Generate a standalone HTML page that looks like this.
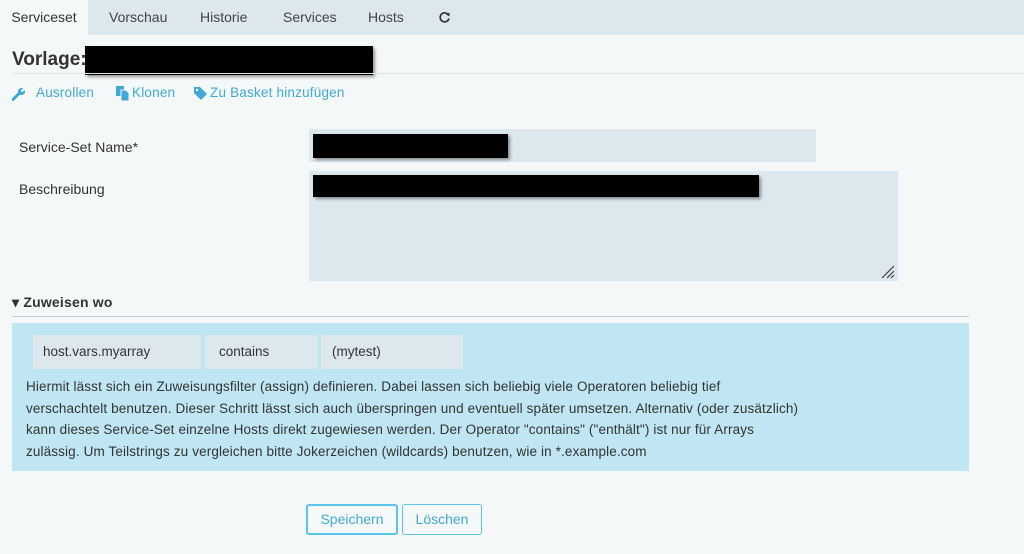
<!DOCTYPE html>
<html><head><meta charset="utf-8"><style>
*{box-sizing:border-box;margin:0;padding:0}
body{width:1024px;height:554px;background:#f5f8f9;font-family:"Liberation Sans",sans-serif;color:#333;font-size:14px;position:relative;overflow:hidden}
.tabs{position:absolute;left:0;top:0;width:1024px;height:35px;background:#dde8ee}
.tab{position:absolute;top:0;height:35px;line-height:35px;font-size:14px;color:#444}
.abs{position:absolute}
.blk{position:absolute;background:#000;box-shadow:2px 2px 3px rgba(0,0,0,.4)}
.link{position:absolute;color:#3fa9d6;font-size:13.5px;letter-spacing:.2px}
.lbl{position:absolute;font-size:14px;color:#333}
.inp{position:absolute;background:#dde8ee}
.chip{position:absolute;top:335px;height:34px;line-height:34px;background:#dde8ee;font-size:13.5px;color:#333}
.txt{position:absolute;left:26px;top:376px;font-size:13.5px;line-height:21.5px;color:#333;letter-spacing:.13px}
.btn{position:absolute;top:504px;height:31px;line-height:29px;text-align:center;border:1px solid #5cc4e8;border-radius:3px;color:#3fa9d6;font-size:14px;background:#f5f8f9}
</style></head><body>
<div class="tabs">
<div class="tab" style="left:0;width:88px;background:#f5f8f9;text-align:center;color:#333">Serviceset</div>
<div class="tab" style="left:109px">Vorschau</div>
<div class="tab" style="left:200px">Historie</div>
<div class="tab" style="left:283px">Services</div>
<div class="tab" style="left:368px">Hosts</div>
<svg class="abs" style="left:438px;top:11px" width="13" height="13" viewBox="0 0 13 13"><path d="M10.5 4A4.5 4.5 0 1 0 11 7.5" fill="none" stroke="#333" stroke-width="1.6"/><path d="M8 3.5L11.5 1.5L11.5 5.5Z" fill="#333"/></svg>
</div>
<div class="abs" style="left:12px;top:49px;font-size:19px;font-weight:bold;color:#333">Vorlage:</div>
<div class="blk" style="left:85px;top:46px;width:288px;height:29px"></div>
<div class="abs" style="left:12px;top:73px;width:1012px;height:1px;background:#dfe3e6"></div>
<svg class="abs" style="left:12px;top:87px" width="14" height="14" viewBox="0 0 14 14"><path d="M1 12.5L7 6.5" stroke="#3fa9d6" stroke-width="3" stroke-linecap="round"/><circle cx="9.5" cy="4.5" r="3.5" fill="#3fa9d6"/><path d="M9.5 4.5L13 1" stroke="#f5f8f9" stroke-width="2.2"/></svg>
<div class="link" style="left:36px;top:85px">Ausrollen</div>
<svg class="abs" style="left:116px;top:86px" width="14" height="15" viewBox="0 0 14 15"><rect x="0" y="0" width="8" height="10" fill="#3fa9d6"/><path d="M5 4H10L13 7V15H5Z" fill="#3fa9d6" stroke="#f5f8f9" stroke-width="1"/></svg>
<div class="link" style="left:132px;top:85px">Klonen</div>
<svg class="abs" style="left:194px;top:87px" width="13" height="13" viewBox="0 0 13 13"><path d="M0 0H6L13 7L7 13L0 6Z" fill="#3fa9d6"/><circle cx="3" cy="3" r="1.2" fill="#f5f8f9"/></svg>
<div class="link" style="left:210px;top:85px">Zu Basket hinzufügen</div>
<div class="lbl" style="left:19px;top:139px">Service-Set Name*</div>
<div class="inp" style="left:309px;top:129px;width:507px;height:33px"></div>
<div class="blk" style="left:313px;top:134px;width:195px;height:24px"></div>
<div class="lbl" style="left:19px;top:181px">Beschreibung</div>
<div class="inp" style="left:309px;top:171px;width:589px;height:110px"></div>
<div class="blk" style="left:313px;top:175px;width:446px;height:22px"></div>
<svg class="abs" style="left:880px;top:264px" width="16" height="16"><path d="M2 14L14 2M7 14L14 7M11 14L14 11" stroke="#444" stroke-width="1.2"/></svg>
<div class="abs" style="left:12px;top:294px;font-size:14px;font-weight:bold;color:#333;letter-spacing:.2px">&#x25BE; Zuweisen wo</div>
<div class="abs" style="left:12px;top:316px;width:957px;height:1px;background:#c8ccd2"></div>
<div class="abs" style="left:12px;top:323px;width:957px;height:148px;background:#bfe6f2"></div>
<div class="chip" style="left:33px;width:168px;padding-left:10px">host.vars.myarray</div>
<div class="chip" style="left:205px;width:113px;padding-left:14px">contains</div>
<div class="chip" style="left:321px;width:142px;padding-left:11px">(mytest)</div>
<div class="txt">Hiermit lässt sich ein Zuweisungsfilter (assign) definieren. Dabei lassen sich beliebig viele Operatoren beliebig tief<br>verschachtelt benutzen. Dieser Schritt lässt sich auch überspringen und eventuell später umsetzen. Alternativ (oder zusätzlich)<br>kann dieses Service-Set einzelne Hosts direkt zugewiesen werden. Der Operator "contains" ("enthält") ist nur für Arrays<br>zulässig. Um Teilstrings zu vergleichen bitte Jokerzeichen (wildcards) benutzen, wie in *.example.com</div>
<div class="btn" style="left:306px;width:92px;border-width:2px;line-height:27px">Speichern</div>
<div class="btn" style="left:402px;width:80px">Löschen</div>
</body></html>
